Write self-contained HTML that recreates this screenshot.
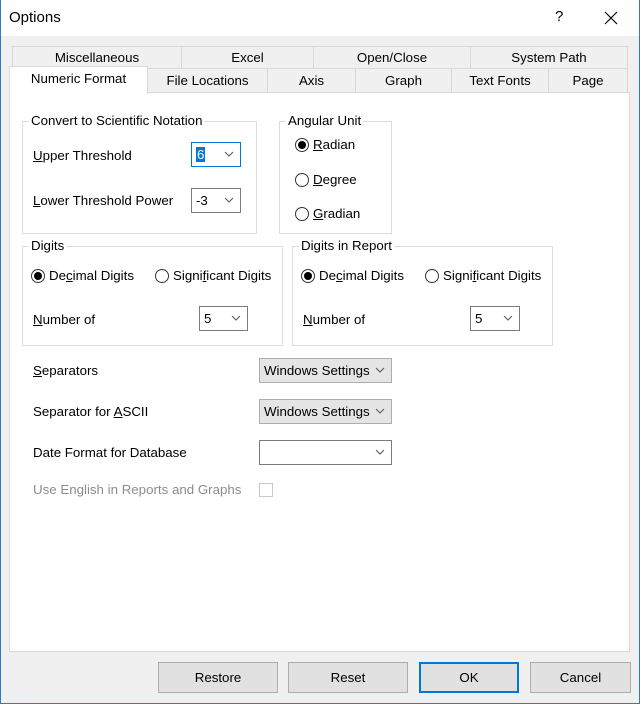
<!DOCTYPE html>
<html><head><meta charset="utf-8"><style>
*{box-sizing:border-box;margin:0;padding:0}
body{width:640px;height:704px;overflow:hidden;background:#f0f0f0;font-family:"Liberation Sans",sans-serif;font-size:13.3px;color:#000;position:relative}
.a{position:absolute}
.t{position:absolute;line-height:18px;white-space:nowrap}
.tab{position:absolute;border:1px solid #d9d9d9;background:#f0f0f0;text-align:center;line-height:21px;font-size:13.3px}
.grp{position:absolute;border:1px solid #dcdcdc}
.gl{position:absolute;top:-10px;left:6px;background:#fff;padding:0 2px;line-height:18px}
.cb{position:absolute;border:1px solid #7a7a7a;background:#fff;height:25px;line-height:23px;padding-left:4px}
.cb svg{position:absolute;right:6px;top:8px}
.rad{position:absolute;width:14px;height:14px;border:1px solid #333;border-radius:50%;background:#fff}
.rad.on::after{content:"";position:absolute;left:2px;top:2px;width:8px;height:8px;border-radius:50%;background:#000}
.btn{position:absolute;top:662px;height:31px;border:1px solid #adadad;background:#e1e1e1;text-align:center;line-height:29px}
u{text-decoration:underline}
</style></head><body>
<div class="a" style="left:0;top:0;width:640px;height:704px;border:1px solid #2b7cc7;border-top:none"></div>
<div class="a" style="left:1px;top:0;width:638px;height:36px;background:#fff"></div>
<div class="t" style="left:9px;top:9px;font-size:15px">Options</div>
<div class="t" style="left:555px;top:8px;font-size:15px">?</div>
<svg class="a" style="left:604px;top:11px" width="14" height="14"><path d="M1 1L13 13M13 1L1 13" stroke="#000" stroke-width="1.2"/></svg>

<div class="tab" style="left:12px;top:46px;width:170px;height:23px">Miscellaneous</div>
<div class="tab" style="left:181px;top:46px;width:133px;height:23px">Excel</div>
<div class="tab" style="left:313px;top:46px;width:158px;height:23px">Open/Close</div>
<div class="tab" style="left:470px;top:46px;width:158px;height:23px">System Path</div>
<div class="tab" style="left:147px;top:68px;width:121px;height:25px;line-height:24px">File Locations</div>
<div class="tab" style="left:267px;top:68px;width:89px;height:25px;line-height:24px">Axis</div>
<div class="tab" style="left:355px;top:68px;width:97px;height:25px;line-height:24px">Graph</div>
<div class="tab" style="left:451px;top:68px;width:98px;height:25px;line-height:24px">Text Fonts</div>
<div class="tab" style="left:548px;top:68px;width:80px;height:25px;line-height:24px">Page</div>
<div class="a" style="left:9px;top:92px;width:621px;height:560px;background:#fff;border:1px solid #d9d9d9"></div>
<div class="tab" style="left:9px;top:66px;width:139px;height:28px;background:#fff;border-bottom:none;line-height:24px">Numeric Format</div>

<div class="grp" style="left:22px;top:121px;width:235px;height:113px"><span class="gl">Convert to Scientific Notation</span></div>
<div class="t" style="left:33px;top:147px"><u>U</u>pper Threshold</div>
<div class="cb" style="left:191px;top:142px;width:50px;border-color:#0078d7"><span style="background:#0078d7;color:#fff;padding:0 1px">6</span><svg width="10" height="6"><path d="M1 1L5 5L9 1" fill="none" stroke="#555"/></svg></div>
<div class="t" style="left:33px;top:192px"><u>L</u>ower Threshold Power</div>
<div class="cb" style="left:191px;top:188px;width:50px">-3<svg width="10" height="6"><path d="M1 1L5 5L9 1" fill="none" stroke="#555"/></svg></div>

<div class="grp" style="left:279px;top:121px;width:113px;height:113px"><span class="gl">Angular Unit</span></div>
<div class="rad on" style="left:295px;top:138px"></div><div class="t" style="left:313px;top:136px"><u>R</u>adian</div>
<div class="rad" style="left:295px;top:173px"></div><div class="t" style="left:313px;top:171px"><u>D</u>egree</div>
<div class="rad" style="left:295px;top:207px"></div><div class="t" style="left:313px;top:205px"><u>G</u>radian</div>

<div class="grp" style="left:22px;top:246px;width:261px;height:100px"><span class="gl">Digits</span></div>
<div class="rad on" style="left:31px;top:269px"></div><div class="t" style="left:49px;top:267px">De<u>c</u>imal Digits</div>
<div class="rad" style="left:155px;top:269px"></div><div class="t" style="left:173px;top:267px">Signi<u>f</u>icant Digits</div>
<div class="t" style="left:33px;top:311px"><u>N</u>umber of</div>
<div class="cb" style="left:199px;top:306px;width:49px">5<svg width="10" height="6"><path d="M1 1L5 5L9 1" fill="none" stroke="#555"/></svg></div>

<div class="grp" style="left:292px;top:246px;width:261px;height:100px"><span class="gl">Digits in Report</span></div>
<div class="rad on" style="left:301px;top:269px"></div><div class="t" style="left:319px;top:267px">De<u>c</u>imal Digits</div>
<div class="rad" style="left:425px;top:269px"></div><div class="t" style="left:443px;top:267px">Signi<u>f</u>icant Digits</div>
<div class="t" style="left:303px;top:311px"><u>N</u>umber of</div>
<div class="cb" style="left:470px;top:306px;width:50px">5<svg width="10" height="6"><path d="M1 1L5 5L9 1" fill="none" stroke="#555"/></svg></div>

<div class="t" style="left:33px;top:362px"><u>S</u>eparators</div>
<div class="cb" style="left:259px;top:358px;width:133px;background:#e5e5e5;border-color:#adadad">Windows Settings<svg width="10" height="6"><path d="M1 1L5 5L9 1" fill="none" stroke="#555"/></svg></div>
<div class="t" style="left:33px;top:403px">Separator for <u>A</u>SCII</div>
<div class="cb" style="left:259px;top:399px;width:133px;background:#e5e5e5;border-color:#adadad">Windows Settings<svg width="10" height="6"><path d="M1 1L5 5L9 1" fill="none" stroke="#555"/></svg></div>
<div class="t" style="left:33px;top:444px">Date Format for Database</div>
<div class="cb" style="left:259px;top:440px;width:133px"><svg width="10" height="6"><path d="M1 1L5 5L9 1" fill="none" stroke="#555"/></svg></div>
<div class="t" style="left:33px;top:481px;color:#8c8c8c">Use English in Reports and Graphs</div>
<div class="a" style="left:259px;top:483px;width:14px;height:14px;border:1px solid #c8c8c8;background:#fff"></div>

<div class="btn" style="left:158px;width:120px">Restore</div>
<div class="btn" style="left:288px;width:120px">Reset</div>
<div class="btn" style="left:419px;width:100px;border:2px solid #0078d7;line-height:27px">OK</div>
<div class="btn" style="left:530px;width:101px">Cancel</div>
</body></html>
